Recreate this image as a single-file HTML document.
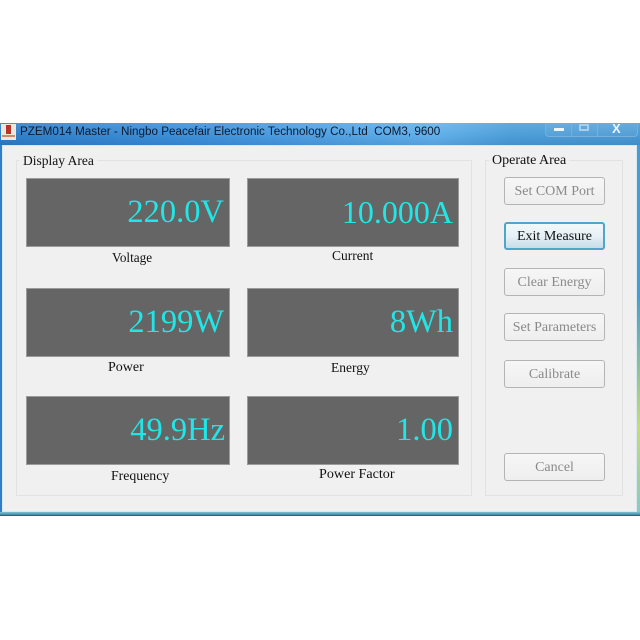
<!DOCTYPE html>
<html><head><meta charset="utf-8"><style>
html,body{margin:0;padding:0;width:640px;height:640px;overflow:hidden;background:#fff}
div{position:absolute;box-sizing:border-box}
.t{font-family:"Liberation Serif",serif;color:#111;font-size:13.5px;white-space:nowrap;line-height:16px}
.d{background:#656565;border:1px solid #9a9a9a;width:204px;height:69px}
.v{font-family:"Liberation Serif",serif;color:#22e6e6;font-size:32.5px;line-height:36px;white-space:nowrap;text-align:right}
.b{left:504px;width:101px;height:28px;border:1px solid #b4b4b4;border-radius:3px;background:linear-gradient(#f6f6f6,#eeeeee);font-family:"Liberation Serif",serif;font-size:14px;color:#8a8a8a;text-align:center;line-height:27px}
</style></head><body>
<div style="left:0;top:123px;width:640px;height:393px;background:linear-gradient(90deg,#2f7fc8 0,#3d90da 30%,#62b0ea 68%,#4d9ed8 80%,#4a9ad4 100%)"></div>
<div style="left:0;top:123px;width:640px;height:22px;background:linear-gradient(rgba(255,255,255,.12),rgba(255,255,255,0) 55%,rgba(0,40,110,.12))"></div>
<div style="left:0;top:512px;width:640px;height:4px;background:linear-gradient(#7fc0d0,#3f8fa6 70%,#0f4a60)"></div>
<div style="left:637px;top:300px;width:3px;height:212px;background:linear-gradient(#4f9fc8,#c8dc70 60%,#8cc8c0)"></div>
<div style="left:2px;top:145px;width:635px;height:367px;background:#f0f0f0;border:1px solid #d8e8f0"></div>
<div style="left:1px;top:124px;width:15px;height:16px;background:#f2e6dc"></div>
<div style="left:6px;top:125px;width:5px;height:9px;background:#b5352c"></div>
<div style="left:2px;top:135px;width:13px;height:2px;background:#c88a70"></div>
<div style="left:20px;top:124px;font:11.67px/16px 'Liberation Sans',sans-serif;color:#0c1a30;white-space:nowrap">PZEM014 Master - Ningbo Peacefair Electronic Technology Co.,Ltd&nbsp; COM3, 9600</div>
<div style="left:545px;top:123px;width:93px;height:14px;border:1px solid #7ab0d8;border-top:0;border-radius:0 0 4px 4px;background:rgba(255,255,255,.06)"></div>
<div style="left:571px;top:123px;width:1px;height:14px;background:#7ab0d8"></div>
<div style="left:597px;top:123px;width:1px;height:14px;background:#7ab0d8"></div>
<div style="left:554px;top:128px;width:10px;height:3px;background:#eef6fc"></div>
<div style="left:579px;top:124px;width:10px;height:7px;border:2px solid #a8cde8"></div>
<div style="left:612px;top:122px;font:bold 13px/14px 'Liberation Sans',sans-serif;color:#eef6fc">X</div>
<div style="left:16px;top:160px;width:456px;height:336px;border:1px solid #e2e2e2"></div>
<div style="left:485px;top:160px;width:138px;height:336px;border:1px solid #e2e2e2"></div>
<div class="t" style="left:20px;top:153px;background:#f0f0f0;padding:0 3px">Display Area</div>
<div class="t" style="left:489px;top:153px;background:#f0f0f0;padding:0 3px;font-size:14px">Operate Area</div>
<div class="d" style="left:26px;top:178px"></div>
<div class="d" style="left:247px;top:178px;width:212px"></div>
<div class="d" style="left:26px;top:288px"></div>
<div class="d" style="left:247px;top:288px;width:212px"></div>
<div class="d" style="left:26px;top:396px"></div>
<div class="d" style="left:247px;top:396px;width:212px"></div>
<div class="v" style="right:416px;top:194px">220.0V</div>
<div class="v" style="right:187px;top:194px;font-size:32px">10.000A</div>
<div class="v" style="right:416px;top:304px">2199W</div>
<div class="v" style="right:187px;top:304px">8Wh</div>
<div class="v" style="right:415px;top:412px">49.9Hz</div>
<div class="v" style="right:187px;top:412px">1.00</div>
<div class="t" style="left:112px;top:250px;font-size:13.2px">Voltage</div>
<div class="t" style="left:332px;top:248px">Current</div>
<div class="t" style="left:108px;top:360px;font-size:14px">Power</div>
<div class="t" style="left:331px;top:360px">Energy</div>
<div class="t" style="left:111px;top:468px;font-size:13.8px">Frequency</div>
<div class="t" style="left:319px;top:466px;font-size:14.1px">Power Factor</div>
<div class="b" style="top:177px">Set COM Port</div>
<div class="b" style="top:222px;border:2px solid #4fa6c8;line-height:26px;color:#111;background:linear-gradient(#f2f8fb,#e6f0f5 50%,#c6dde9)">Exit Measure</div>
<div class="b" style="top:268px">Clear Energy</div>
<div class="b" style="top:313px">Set Parameters</div>
<div class="b" style="top:360px">Calibrate</div>
<div class="b" style="top:453px">Cancel</div>
</body></html>
